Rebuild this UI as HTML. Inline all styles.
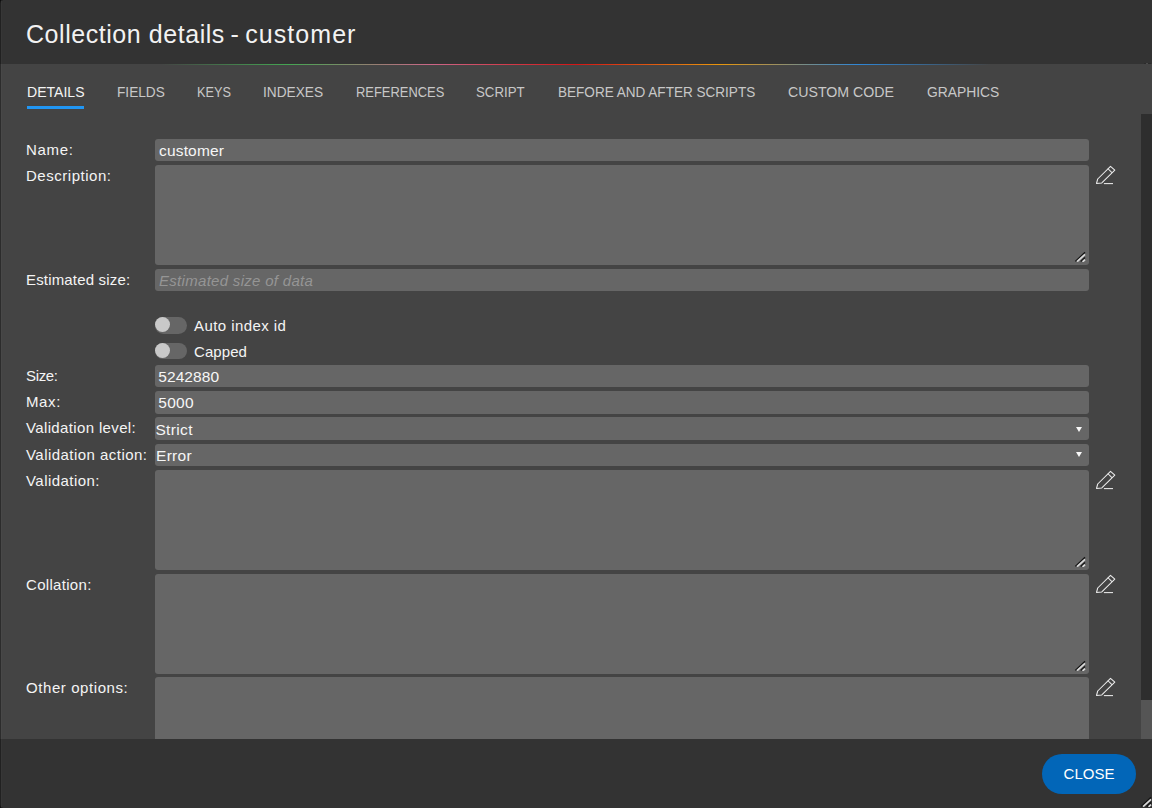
<!DOCTYPE html>
<html lang="en">
<head>
<meta charset="utf-8">
<title>Collection details - customer</title>
<style>
html,body{margin:0;padding:0;}
body{width:1152px;height:808px;overflow:hidden;background:#444444;color:#eeeeee;
  font-family:"Liberation Sans",sans-serif;font-size:15px;position:relative;}
*{box-sizing:border-box;}
.abs{position:absolute;}
#edgeL{left:0;top:0;width:1px;height:808px;background:rgba(0,0,0,.34);}
#edgeL2{left:1px;top:0;width:1px;height:808px;background:rgba(255,255,255,.022);}
#cTL{left:0;top:0;width:3px;height:3px;background:radial-gradient(circle at 100% 100%,rgba(0,0,0,0) 2.2px,rgba(10,10,10,.85) 3.6px);}
#cBL{left:0;top:805px;width:3px;height:3px;background:radial-gradient(circle at 100% 0%,rgba(0,0,0,0) 2.2px,rgba(10,10,10,.85) 3.6px);}
.dot{top:63px;height:1px;}
#header{left:0;top:0;width:1152px;height:64px;background:#333333;}
#title{left:26px;top:19px;font-size:25px;letter-spacing:.55px;line-height:30px;white-space:nowrap;color:#f2f2f2;}
#rainbow{left:0;top:64px;width:1152px;height:1px;
  background:linear-gradient(to right,rgba(68,68,68,0) 14%,#44a552 25%,#cc6688 37.5%,#d41616 50%,#e8960c 62.5%,#2f86d6 74.5%,rgba(68,68,68,0) 86%);}
.tab{transform-origin:0 50%;top:81.5px;height:20px;line-height:20px;font-size:15px;color:#c8c8c8;white-space:nowrap;}
.tab.on{color:#f4f4f4;}
#tabline{left:27px;top:106px;width:57px;height:3px;background:#2196f3;}
.lbl{left:26px;height:20px;line-height:20px;font-size:15px;color:#f4f4f4;white-space:nowrap;}
.inp{left:155px;width:934px;background:#666666;border-radius:3px;color:#f6f6f6;font-size:15px;
  line-height:24px;padding-left:4px;white-space:nowrap;}
.ph{color:#959595;font-style:italic;}
.tog{left:155px;width:32px;height:17px;border-radius:8.5px;background:#666666;}
.tog i{position:absolute;left:0;top:0;width:15px;height:15px;border-radius:50%;background:#c9c9c9;}
.toglbl{left:194px;height:20px;line-height:20px;font-size:15px;color:#f4f4f4;}
.arrow{left:1076.3px;width:0;height:0;border-left:3.6px solid transparent;border-right:3.6px solid transparent;border-top:5.6px solid #f8f8f8;}
.grip{width:12px;height:12px;}
.pen{left:1095px;width:21px;height:21px;}
#sbtrack{left:1141px;top:114px;width:11px;height:625px;background:#555555;}
#sbthumb{left:1141px;top:114px;width:11px;height:585.5px;background:#2e2e2e;}
#footer{left:0;top:739px;width:1152px;height:69px;background:#333333;}
#close{left:1042px;top:754px;width:94px;height:40px;border-radius:20px;background:#0266b8;color:#ffffff;
  font-size:15px;line-height:40px;text-align:center;}
</style>
</head>
<body>
<div class="abs" id="header"></div>
<div class="abs" id="title">Collection details <span style="margin-left:-2px">-</span> <span style="margin-left:-1.5px;letter-spacing:1.05px">customer</span></div>
<div class="abs" id="rainbow"></div>

<div class="abs tab on" id="t1" style="left:27.3px;transform:scaleX(0.937)">DETAILS</div>
<div class="abs tab" id="t2" style="left:117.3px;transform:scaleX(0.911)">FIELDS</div>
<div class="abs tab" id="t3" style="left:197.3px;transform:scaleX(0.849)">KEYS</div>
<div class="abs tab" id="t4" style="left:263.3px;transform:scaleX(0.913)">INDEXES</div>
<div class="abs tab" id="t5" style="left:356.3px;transform:scaleX(0.861)">REFERENCES</div>
<div class="abs tab" id="t6" style="left:476.3px;transform:scaleX(0.884)">SCRIPT</div>
<div class="abs tab" id="t7" style="left:558.3px;transform:scaleX(0.903)">BEFORE AND AFTER SCRIPTS</div>
<div class="abs tab" id="t8" style="left:788.3px;transform:scaleX(0.945)">CUSTOM CODE</div>
<div class="abs tab" id="t9" style="left:927.3px;transform:scaleX(0.923)">GRAPHICS</div>
<div class="abs" id="tabline"></div>

<div class="abs lbl" id="l1" style="top:140px;letter-spacing:0.70px">Name:</div>
<div class="abs inp" id="v1" style="top:139px;height:22px;font-size:15.5px;letter-spacing:0.17px">customer</div>

<div class="abs lbl" id="l2" style="top:166px;letter-spacing:0.53px">Description:</div>
<div class="abs inp" style="top:165px;height:100px"></div>

<div class="abs lbl" id="l3" style="top:270px;letter-spacing:0.17px">Estimated size:</div>
<div class="abs inp ph" id="v2" style="top:269px;height:22px;letter-spacing:0.30px">Estimated size of data</div>

<div class="abs tog" style="top:317px"><i></i></div>
<div class="abs toglbl" id="g1" style="top:316px;letter-spacing:0.43px">Auto index id</div>
<div class="abs tog" style="top:343px;height:16px"><i></i></div>
<div class="abs toglbl" id="g2" style="top:342px;letter-spacing:0.08px">Capped</div>

<div class="abs lbl" id="l4" style="top:366px;letter-spacing:-0.33px">Size:</div>
<div class="abs inp" id="v3" style="padding-left:3.3px;top:365px;height:22px;font-size:15.5px;letter-spacing:0.07px">5242880</div>
<div class="abs lbl" id="l5" style="top:392px;letter-spacing:0.60px">Max:</div>
<div class="abs inp" id="v4" style="padding-left:3.3px;top:391px;height:23px;font-size:15.5px;letter-spacing:0.24px">5000</div>

<div class="abs lbl" id="l6" style="top:418px;letter-spacing:0.36px">Validation level:</div>
<div class="abs inp" id="v5" style="top:417px;height:23px;padding-left:0.4px;line-height:26px;font-size:15.5px;letter-spacing:0.36px">Strict</div>
<div class="abs arrow" style="top:427px"></div>
<div class="abs lbl" id="l7" style="top:445px;letter-spacing:0.46px">Validation action:</div>
<div class="abs inp" id="v6" style="top:444px;height:22px;padding-left:1px;line-height:24px;font-size:15.5px;letter-spacing:0.3px">Error</div>
<div class="abs arrow" style="top:452px"></div>

<div class="abs lbl" id="l8" style="top:471px;letter-spacing:0.46px">Validation:</div>
<div class="abs inp" style="top:470px;height:100px"></div>
<div class="abs lbl" id="l9" style="top:575px;letter-spacing:0.31px">Collation:</div>
<div class="abs inp" style="top:574px;height:100px"></div>
<div class="abs lbl" id="l10" style="top:678px;letter-spacing:0.58px">Other options:</div>
<div class="abs inp" style="top:677px;height:100px"></div>

<svg class="abs pen" style="top:164px" viewBox="0 0 21 21" fill="none" stroke="#ececec" stroke-width="1.05" stroke-linejoin="round"><path d="M15.5 2.3L19.8 6.2L6.8 18.9L1.5 19.5L2.7 15Z"/><path d="M12.8 4.5L16.9 8.6"/><path d="M8.9 19.6H18"/></svg>
<svg class="abs pen" style="top:469px" viewBox="0 0 21 21" fill="none" stroke="#ececec" stroke-width="1.05" stroke-linejoin="round"><path d="M15.5 2.3L19.8 6.2L6.8 18.9L1.5 19.5L2.7 15Z"/><path d="M12.8 4.5L16.9 8.6"/><path d="M8.9 19.6H18"/></svg>
<svg class="abs pen" style="top:573px" viewBox="0 0 21 21" fill="none" stroke="#ececec" stroke-width="1.05" stroke-linejoin="round"><path d="M15.5 2.3L19.8 6.2L6.8 18.9L1.5 19.5L2.7 15Z"/><path d="M12.8 4.5L16.9 8.6"/><path d="M8.9 19.6H18"/></svg>
<svg class="abs pen" style="top:676px" viewBox="0 0 21 21" fill="none" stroke="#ececec" stroke-width="1.05" stroke-linejoin="round"><path d="M15.5 2.3L19.8 6.2L6.8 18.9L1.5 19.5L2.7 15Z"/><path d="M12.8 4.5L16.9 8.6"/><path d="M8.9 19.6H18"/></svg>
<svg class="abs grip" style="left:1074px;top:250px" viewBox="0 0 12 12" fill="none"><path d="M1.3 11.4L11 2.3M6.7 11.4L11 7.6" stroke="#141414" stroke-width="1.3"/><path d="M3.1 11.6L11 4.4M8.6 11.9L11 9.6" stroke="#dadada" stroke-width="1.7"/></svg>
<svg class="abs grip" style="left:1074px;top:555px" viewBox="0 0 12 12" fill="none"><path d="M1.3 11.4L11 2.3M6.7 11.4L11 7.6" stroke="#141414" stroke-width="1.3"/><path d="M3.1 11.6L11 4.4M8.6 11.9L11 9.6" stroke="#dadada" stroke-width="1.7"/></svg>
<svg class="abs grip" style="left:1074px;top:659px" viewBox="0 0 12 12" fill="none"><path d="M1.3 11.4L11 2.3M6.7 11.4L11 7.6" stroke="#141414" stroke-width="1.3"/><path d="M3.1 11.6L11 4.4M8.6 11.9L11 9.6" stroke="#dadada" stroke-width="1.7"/></svg>
<div class="abs" id="sbtrack"></div>
<div class="abs" id="sbthumb"></div>
<div class="abs" id="footer"></div>
<div class="abs" id="close">CLOSE</div>
<svg class="abs grip" style="left:1140px;top:795.4px" viewBox="0 0 12 12" fill="none"><path d="M1.3 11.4L11 2.3M6.7 11.4L11 7.6" stroke="#141414" stroke-width="1.3"/><path d="M3.1 11.6L11 4.4M8.6 11.9L11 9.6" stroke="#dadada" stroke-width="1.7"/></svg>
<div class="abs" id="edgeL"></div><div class="abs" id="edgeL2"></div><div class="abs" id="cTL"></div><div class="abs" id="cBL"></div>
<div class="abs dot" style="left:1144px;width:2px;background:#2b2b2b"></div><div class="abs dot" style="left:1146px;width:2px;background:#4c4c4c"></div><div class="abs dot" style="left:1148px;width:3px;background:#2b2b2b"></div>
</body>
</html>
